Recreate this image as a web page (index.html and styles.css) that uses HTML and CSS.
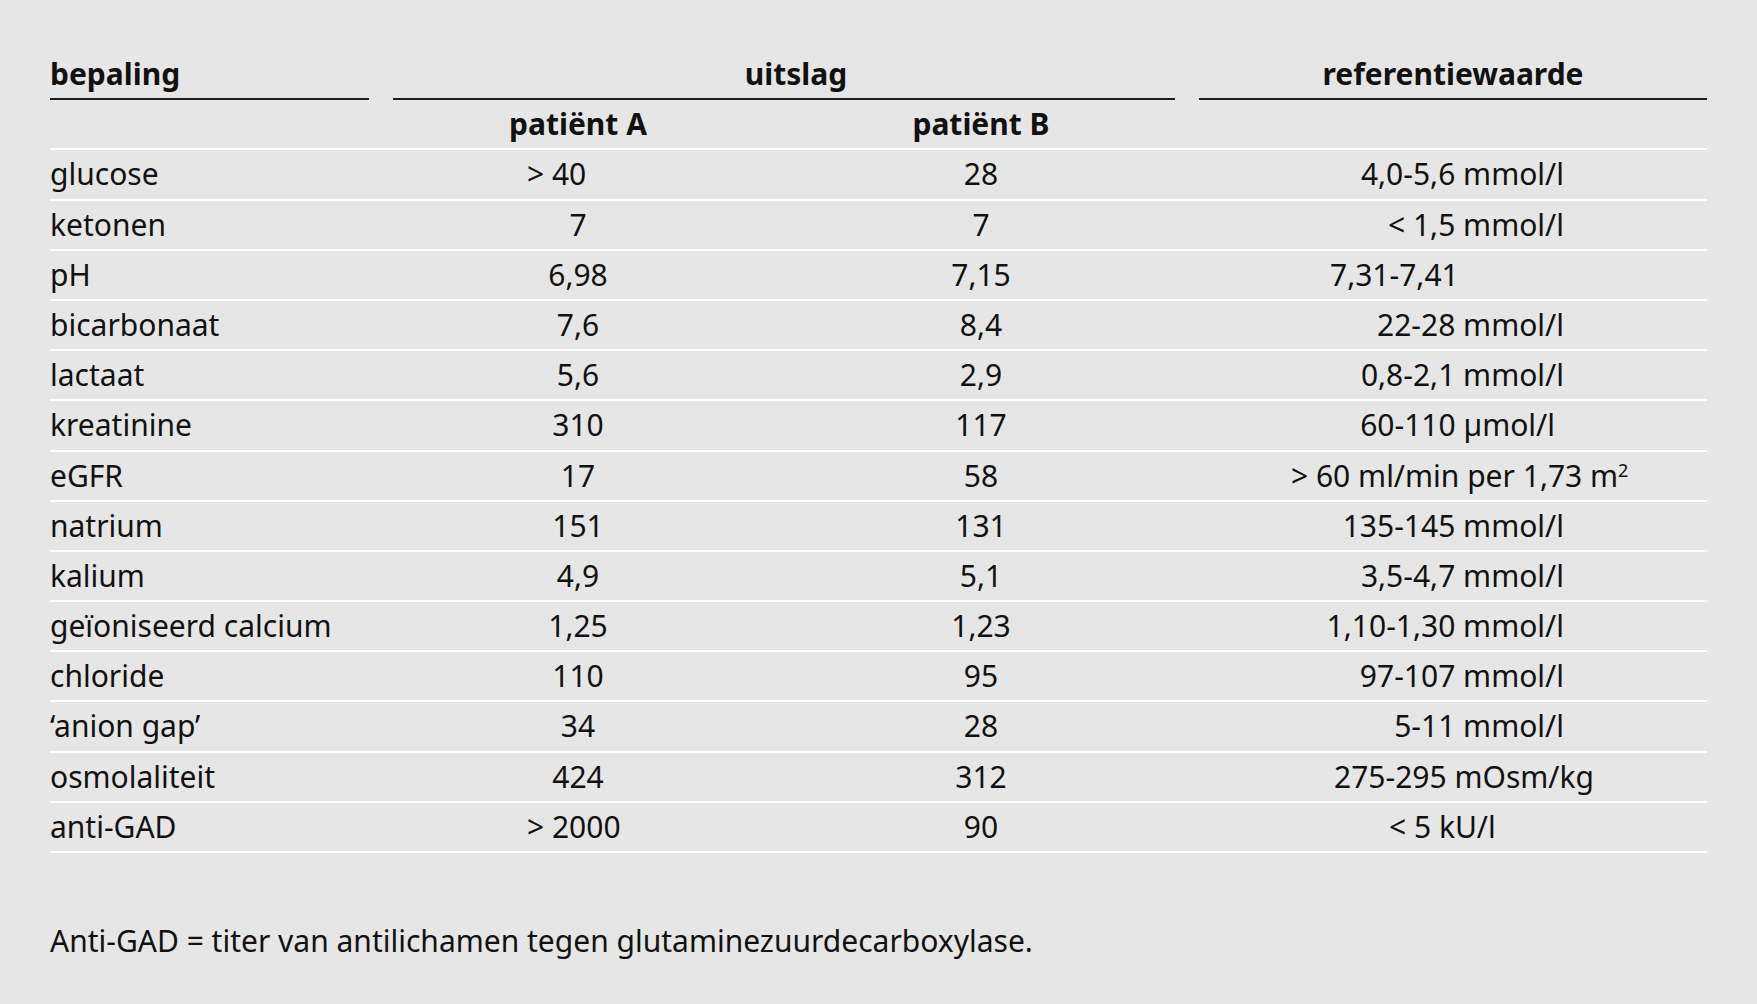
FILE: index.html
```html
<!DOCTYPE html>
<html lang="nl">
<head>
<meta charset="utf-8">
<title>Laboratoriumuitslagen</title>
<link rel="stylesheet" href="styles.css">
</head>
<body>
<div class="table">
  <div class="row head">
    <div class="c-name th line">bepaling</div>
    <div class="c-gap"></div>
    <div class="c-res th line">uitslag</div>
    <div class="c-gap"></div>
    <div class="c-ref th line">referentiewaarde</div>
  </div>
  <div class="row sub">
    <div class="c-name"></div>
    <div class="c-gap"></div>
    <div class="c-a th">patiënt A</div>
    <div class="c-b th">patiënt B</div>
    <div class="c-ref"></div>
  </div>
  <div class="row"><div class="c-name">glucose</div><div class="c-gap"></div><div class="c-a gt">&gt; 40</div><div class="c-b">28</div><div class="c-ref">4,0-5,6 mmol/l</div></div>
  <div class="row"><div class="c-name">ketonen</div><div class="c-gap"></div><div class="c-a">7</div><div class="c-b">7</div><div class="c-ref">&lt; 1,5 mmol/l</div></div>
  <div class="row"><div class="c-name">pH</div><div class="c-gap"></div><div class="c-a">6,98</div><div class="c-b">7,15</div><div class="c-ref ph">7,31-7,41</div></div>
  <div class="row"><div class="c-name">bicarbonaat</div><div class="c-gap"></div><div class="c-a">7,6</div><div class="c-b">8,4</div><div class="c-ref">22-28 mmol/l</div></div>
  <div class="row"><div class="c-name">lactaat</div><div class="c-gap"></div><div class="c-a">5,6</div><div class="c-b">2,9</div><div class="c-ref">0,8-2,1 mmol/l</div></div>
  <div class="row"><div class="c-name">kreatinine</div><div class="c-gap"></div><div class="c-a">310</div><div class="c-b">117</div><div class="c-ref umol">60-110 µmol/l</div></div>
  <div class="row"><div class="c-name">eGFR</div><div class="c-gap"></div><div class="c-a">17</div><div class="c-b">58</div><div class="c-ref egfr">&gt; 60 ml/min per 1,73 m<sup>2</sup></div></div>
  <div class="row"><div class="c-name">natrium</div><div class="c-gap"></div><div class="c-a">151</div><div class="c-b">131</div><div class="c-ref">135-145 mmol/l</div></div>
  <div class="row"><div class="c-name">kalium</div><div class="c-gap"></div><div class="c-a">4,9</div><div class="c-b">5,1</div><div class="c-ref">3,5-4,7 mmol/l</div></div>
  <div class="row"><div class="c-name">geïoniseerd calcium</div><div class="c-gap"></div><div class="c-a">1,25</div><div class="c-b">1,23</div><div class="c-ref">1,10-1,30 mmol/l</div></div>
  <div class="row"><div class="c-name">chloride</div><div class="c-gap"></div><div class="c-a">110</div><div class="c-b">95</div><div class="c-ref">97-107 mmol/l</div></div>
  <div class="row"><div class="c-name">‘anion gap’</div><div class="c-gap"></div><div class="c-a">34</div><div class="c-b">28</div><div class="c-ref">5-11 mmol/l</div></div>
  <div class="row"><div class="c-name">osmolaliteit</div><div class="c-gap"></div><div class="c-a">424</div><div class="c-b">312</div><div class="c-ref osm">275-295 mOsm/kg</div></div>
  <div class="row"><div class="c-name">anti-GAD</div><div class="c-gap"></div><div class="c-a gt">&gt; 2000</div><div class="c-b">90</div><div class="c-ref kul">&lt; 5 kU/l</div></div>
</div>
<p class="note">Anti-GAD = titer van antilichamen tegen glutaminezuurdecarboxylase.</p>
</body>
</html>
```
FILE: styles.css
```css
html, body {
  margin: 0;
  padding: 0;
  background: #e6e6e6;
}
body {
  font-family: "Noto Sans", "Open Sans", sans-serif;
  font-size: 30px;
  color: #111;
  padding: 50px 50px 0;
}
.table {
  width: 1657px;
}
.row {
  display: grid;
  grid-template-columns: 319px 24px 370px 436px 508px;
  height: 50.2px;
  box-sizing: border-box;
  border-bottom: 2px solid #ffffff;
  line-height: 48.2px;
  white-space: nowrap;
}
.row.head {
  grid-template-columns: 319px 24px 782px 24px 508px;
  border-bottom: none;
}
.row.head > div {
  height: 50.2px;
  box-sizing: border-box;
}
.th {
  font-weight: 700;
}
.line {
  border-bottom: 2px solid #1e1e1e;
}
.c-name {
  text-align: left;
}
.c-res {
  text-align: center;
  padding-left: 24px;
}
.c-a {
  text-align: center;
}
.c-a.gt {
  text-align: left;
  padding-left: 134px;
}
.c-b {
  text-align: center;
}
.c-ref {
  text-align: right;
  padding-right: 143px;
}
.head .c-ref {
  text-align: center;
  padding-right: 0;
}
.c-ref.umol {
  padding-right: 152px;
}
.c-ref.ph,
.c-ref.egfr,
.c-ref.osm,
.c-ref.kul {
  text-align: left;
  padding-right: 0;
}
.c-ref.ph { padding-left: 131px; }
.c-ref.egfr { padding-left: 92px; }
.c-ref.osm { padding-left: 135px; }
.c-ref.kul { padding-left: 190px; }
sup {
  font-size: 0.6em;
  line-height: 0;
  vertical-align: 0.55em;
}
.note {
  margin: 68px 0 0;
  line-height: 40px;
}
```
